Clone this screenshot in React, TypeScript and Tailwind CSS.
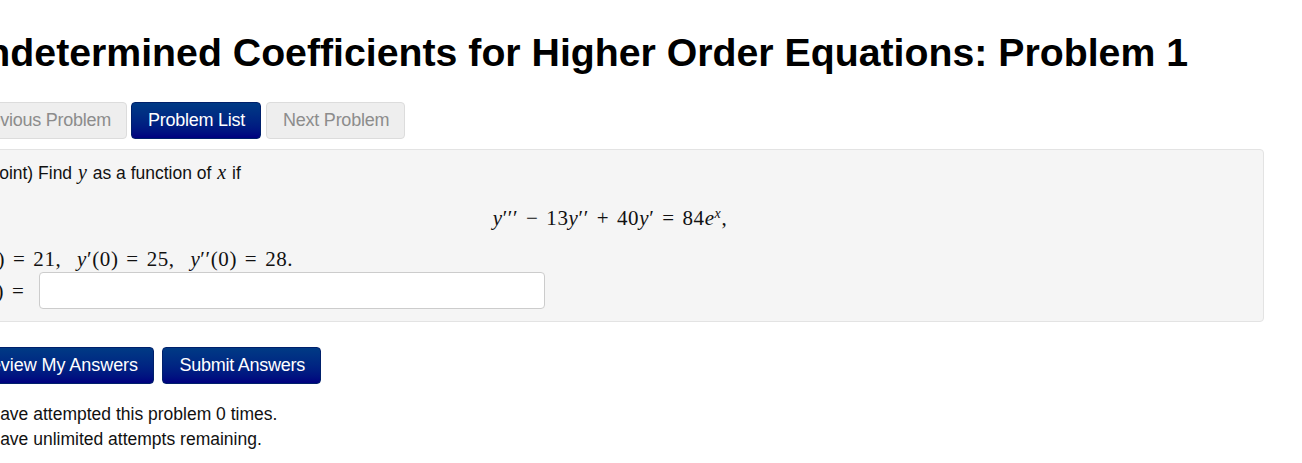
const mathFont = "font-['Liberation_Serif',serif] text-[21px] tracking-[0.6px] [word-spacing:2px]"

function V({ children }: { children: React.ReactNode }) {
  return <i className="font-['Liberation_Serif',serif] italic">{children}</i>
}

// inline variable in running text, a bit larger than the sans text around it
function InlineV({ children }: { children: React.ReactNode }) {
  return <i className="font-['Liberation_Serif',serif] italic text-[20px] mx-[1px]">{children}</i>
}

function NavButton({ label, disabled, wide }: { label: string; disabled?: boolean; wide?: boolean }) {
  const spacing = wide ? 'tracking-[-0.06px]' : 'tracking-[-0.25px]'
  if (disabled) {
    return (
      <span className={`h-[37px] pl-[16px] pr-[15px] flex items-center rounded-[4px] border border-[#dcdcdc] bg-[#eeeeee] text-[#8c8c8c] text-[18px] ${spacing}`}>
        {label}
      </span>
    )
  }
  return (
    <button className={`h-[37px] pl-[16px] pr-[15px] flex items-center rounded-[4px] border border-[#00206b] bg-gradient-to-b from-[#003a85] to-[#00007f] text-white text-[18px] ${spacing}`}>
      {label}
    </button>
  )
}

export default function App() {
  return (
    <div className="h-[463px] overflow-hidden bg-white text-black font-['Liberation_Sans',Arial,sans-serif]">
      <div className="ml-[-44px] w-[1308px]">
        <h1 className="pt-[29px] pl-[2px] h-[102px] text-[39.25px] leading-[46px] font-bold whitespace-nowrap">
          Undetermined Coefficients for Higher Order Equations: Problem 1
        </h1>

        <div className="flex gap-[4px]">
          <NavButton label="Previous Problem" disabled />
          <NavButton label="Problem List" />
          <div className="ml-[1px]">
            <NavButton label="Next Problem" disabled />
          </div>
        </div>

        <div className="mt-[10px] h-[173px] rounded-[4px] border border-[#e3e3e3] bg-[#f5f5f5] pl-[12px] pr-[12px] pt-[10px] text-[17.5px] leading-[24px] text-[#111111]">
          <p className="whitespace-nowrap">
            (1 point) Find <InlineV>y</InlineV> as a function of <InlineV>x</InlineV> if
          </p>

          <p className={`${mathFont} mt-[21px] h-[26px] text-center leading-[24px] whitespace-nowrap`}>
            <V>y</V>′′′ − 13<V>y</V>′′ + 40<V>y</V>′ = 84<V>e</V>
            <sup className="text-[14px] italic">x</sup>,
          </p>

          <p className={`${mathFont} mt-[15px] h-[24px] leading-[24px] whitespace-pre`}>
            <V>y</V>(0) = 21,  <V>y</V>′(0) = 25,  <V>y</V>′′(0) = 28.
          </p>

          <div className="mt-[1px] flex items-center gap-[9px] h-[37px]">
            <span className={`${mathFont} w-[61px] shrink-0 whitespace-pre`}>
              <V>y</V>(<V>x</V>) =
            </span>
            <input
              type="text"
              className="h-[37px] w-[506px] rounded-[4px] border border-[#cccccc] bg-white"
            />
          </div>
        </div>

        <div className="mt-[25px] flex gap-[8.5px]">
          <NavButton label="Preview My Answers" wide />
          <NavButton label="Submit Answers" />
        </div>

        <div className="mt-[18px] text-[17.5px] leading-[25px] text-[#111111] whitespace-nowrap">
          <p>You have attempted this problem 0 times.</p>
          <p>You have unlimited attempts remaining.</p>
        </div>
      </div>
    </div>
  )
}
